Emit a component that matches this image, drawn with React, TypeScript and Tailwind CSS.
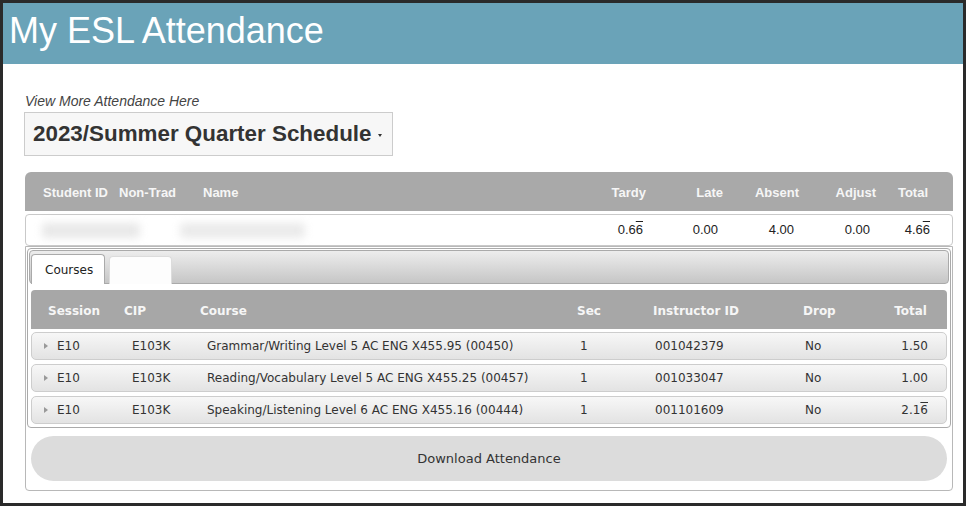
import React from "react";

// Attendance summary page: banner, term picker, totals row and per-course breakdown.

type Course = {
  session: string;
  cip: string;
  title: string;
  sec: string;
  instructor: string;
  drop: string;
  total: string;
  repeat?: string;
};

const COURSES: Course[] = [
  { session: "E10", cip: "E103K", title: "Grammar/Writing Level 5 AC ENG X455.95 (00450)", sec: "1", instructor: "001042379", drop: "No", total: "1.50" },
  { session: "E10", cip: "E103K", title: "Reading/Vocabulary Level 5 AC ENG X455.25 (00457)", sec: "1", instructor: "001033047", drop: "No", total: "1.00" },
  { session: "E10", cip: "E103K", title: "Speaking/Listening Level 6 AC ENG X455.16 (00444)", sec: "1", instructor: "001101609", drop: "No", total: "2.1", repeat: "6" },
];

const SUMMARY_COLS = "grid grid-cols-[90px_80px_385px_70px_77px_76px_77px_1fr]";
const COURSE_COLS = "grid grid-cols-[87px_77px_365px_60px_160px_80px_1fr]";

// repeating decimal: last digit gets a bar over it
function Repeating({ base, digit }: { base: string; digit: string }) {
  return (
    <span>
      {base}
      <span className="overline">{digit}</span>
    </span>
  );
}

function SummaryTable() {
  return (
    <div className="mt-[16px] ml-[1px] w-[928px]">
      <div className={`${SUMMARY_COLS} h-[39px] items-center rounded-t-[6px] bg-[#a9a9a9] pt-[3px] text-[13px] font-bold text-[#f6f6f6]`}>
        <div className="pl-[18px]">Student ID</div>
        <div className="pl-[4px]">Non-Trad</div>
        <div className="pl-[8px]">Name</div>
        <div className="pr-[4px] text-right">Tardy</div>
        <div className="pr-[4px] text-right">Late</div>
        <div className="pr-[4px] text-right">Absent</div>
        <div className="pr-[4px] text-right">Adjust</div>
        <div className="pr-[25px] text-right">Total</div>
      </div>
      <div className={`${SUMMARY_COLS} mt-[3px] h-[32px] items-center rounded-[4px] border border-[#c9c9c9] bg-white text-[13px] text-[#222]`}>
        <div className="col-span-3 flex items-center">
          <div className="ml-[16px] h-[15px] w-[98px] rounded bg-[#e8e8e8] blur-[4px]" />
          <div className="ml-[40px] h-[15px] w-[125px] rounded bg-[#eaeaea] blur-[4px]" />
        </div>
        <div className="pr-[8px] text-right">
          <Repeating base="0.6" digit="6" />
        </div>
        <div className="pr-[10px] text-right">0.00</div>
        <div className="pr-[10px] text-right">4.00</div>
        <div className="pr-[11px] text-right">0.00</div>
        <div className="pr-[22px] text-right">
          <Repeating base="4.6" digit="6" />
        </div>
      </div>
    </div>
  );
}

function CourseRow({ c }: { c: Course }) {
  return (
    <div className={`${COURSE_COLS} h-[28px] items-center rounded-[5px] border border-[#cdcdcd] bg-gradient-to-b from-[#f7f7f7] to-[#e3e3e3] text-[12px] text-[#333]`}>
      <div className="flex items-center pl-[12px]">
        <span className="h-0 w-0 border-y-[3px] border-l-[4px] border-y-transparent border-l-[#999]" />
        <span className="ml-[9px]">{c.session}</span>
      </div>
      <div className="pl-[13px]">{c.cip}</div>
      <div className="pl-[11px]">{c.title}</div>
      <div className="pl-[19px]">{c.sec}</div>
      <div className="pl-[34px]">{c.instructor}</div>
      <div className="pl-[24px]">{c.drop}</div>
      <div className="pr-[18px] text-right">
        {c.repeat ? <Repeating base={c.total} digit={c.repeat} /> : c.total}
      </div>
    </div>
  );
}

function CoursesPanel() {
  return (
    <div className="ml-[1px] w-[928px] rounded-b-[4px] border border-[#b8b8b8] p-[1px] font-['DejaVu_Sans',Verdana,sans-serif]">
      <div className="rounded-[4px] border border-[#aaa] p-[1px] pb-[3px]">
        {/* tab strip */}
        <div className="flex h-[34px] items-end gap-[4px] rounded-[4px] border border-[#aaa] bg-gradient-to-b from-[#ededed] to-[#c6c6c6] pl-[1px]">
          <div className="-mb-px flex h-[30px] w-[74px] items-center rounded-t-[4px] border border-b-0 border-[#aaa] bg-white pl-[13px] text-[12px] text-[#222]">
            Courses
          </div>
          <div className="-mb-px h-[28px] w-[63px] rounded-t-[4px] border border-b-0 border-[#dcdcdc] bg-[#fdfdfd]" />
        </div>

        <div className="mt-[6px] px-[2px]">
          <div className={`${COURSE_COLS} h-[39px] items-center rounded-t-[4px] bg-[#a7a7a7] pt-[2px] text-[12px] font-bold text-[#f6f6f6]`}>
            <div className="pl-[17px]">Session</div>
            <div className="pl-[6px]">CIP</div>
            <div className="pl-[5px]">Course</div>
            <div className="pl-[17px]">Sec</div>
            <div className="pl-[33px]">Instructor ID</div>
            <div className="pl-[23px]">Drop</div>
            <div className="pr-[20px] text-right">Total</div>
          </div>
          <div className="mt-[3px] flex flex-col gap-[4px]">
            {COURSES.map((c) => (
              <CourseRow key={c.title} c={c} />
            ))}
          </div>
        </div>
      </div>

      <div className="px-[4px] pt-[8px] pb-[8px]">
        <button className="flex h-[45px] w-full items-center justify-center rounded-full bg-[#dcdcdc] text-[13px] text-[#333]">
          Download Attendance
        </button>
      </div>
    </div>
  );
}

export default function App() {
  return (
    <div className="box-border h-[506px] w-[966px] overflow-hidden border-[3px] border-[#2a2a2a] bg-white font-['Liberation_Sans',Arial,sans-serif]">
      <header className="h-[61px] bg-[#6aa3b8] pl-[6px] pt-[8px] text-[36px] leading-[40px] text-white">
        My ESL Attendance
      </header>

      <main className="pl-[21px] pr-[10px]">
        <p className="pl-[1px] pt-[29px] text-[14px] italic leading-[16px] text-[#444]">View More Attendance Here</p>
        <div className="mt-[3px] flex h-[44px] w-[369px] items-center border border-[#ccc] bg-[#f7f7f7] pl-[8px] text-[22.4px] font-bold text-[#333]">
          2023/Summer Quarter Schedule
          <span className="ml-[6px] mt-[2px] h-0 w-0 border-x-[2.5px] border-t-[3px] border-x-transparent border-t-[#333]" />
        </div>

        <SummaryTable />
        <CoursesPanel />
      </main>
    </div>
  );
}
